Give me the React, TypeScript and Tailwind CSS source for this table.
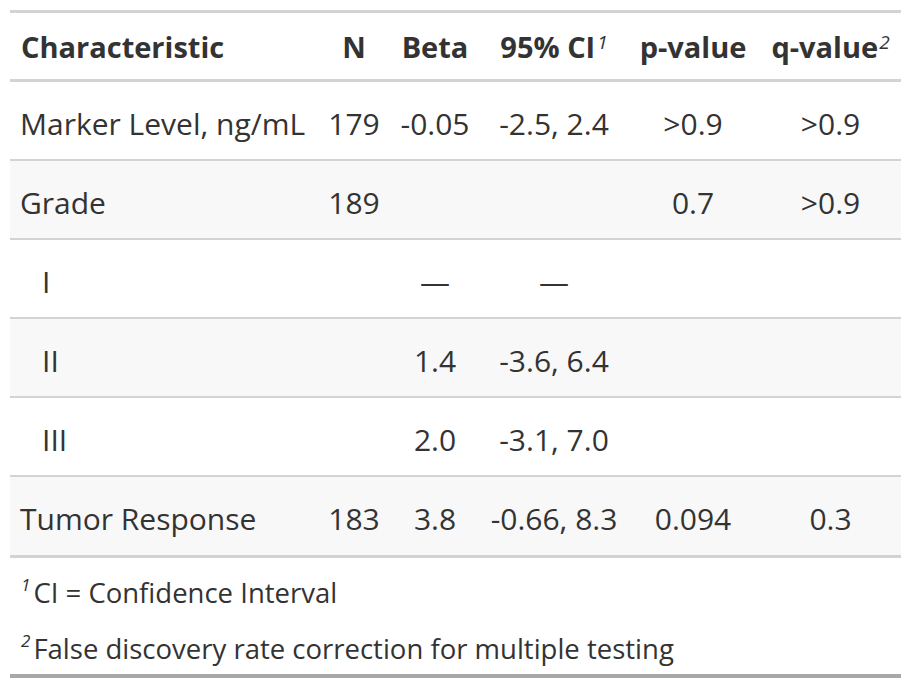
const rows: {
  label: string;
  indent?: boolean;
  n?: string;
  beta?: string;
  ci?: string;
  p?: string;
  q?: string;
}[] = [
  { label: "Marker Level, ng/mL", n: "179", beta: "-0.05", ci: "-2.5, 2.4", p: ">0.9", q: ">0.9" },
  { label: "Grade", n: "189", p: "0.7", q: ">0.9" },
  { label: "I", indent: true, beta: "—", ci: "—" },
  { label: "II", indent: true, beta: "1.4", ci: "-3.6, 6.4" },
  { label: "III", indent: true, beta: "2.0", ci: "-3.1, 7.0" },
  { label: "Tumor Response", n: "183", beta: "3.8", ci: "-0.66, 8.3", p: "0.094", q: "0.3" },
];

const cols = "grid grid-cols-[310px_68px_94px_144px_134px_141px] items-center";

export default function App() {
  return (
    <div className="min-h-screen bg-white px-[10px] pt-[10px] text-[#333333] font-['Open_Sans',sans-serif] text-[30px]">
      <div className="w-[891px] border-t-[3px] border-b-[4px] border-t-[#d3d3d3] border-b-[#a8a8a8]">
        {/* column labels */}
        <div className={`${cols} h-[69px] pt-[2px] border-b-[3px] border-[#d3d3d3] font-bold text-[29px]`}>
          <div className="pl-[11px]">Characteristic</div>
          <div className="text-center">N</div>
          <div className="text-center">Beta</div>
          <div className="text-center whitespace-nowrap">
            95% CI<sup className="font-normal italic text-[19px] ml-[2px]">1</sup>
          </div>
          <div className="text-center">p-value</div>
          <div className="text-center whitespace-nowrap">
            q-value<sup className="font-normal italic text-[19px] ml-[1px]">2</sup>
          </div>
        </div>

        {rows.map((r, i) => (
          <div
            key={r.label}
            className={`${cols} pt-[5px] ${i === rows.length - 1 ? "h-[81px] border-b-[3px]" : "h-[79px] border-b-2"} border-[#d3d3d3] ${i % 2 === 1 ? "bg-[#f8f8f8]" : "bg-white"}`}
          >
            <div className={r.indent ? "pl-[32px]" : "pl-[10px]"}>{r.label}</div>
            <div className="text-center">{r.n}</div>
            <div className="text-center">{r.beta}</div>
            <div className="text-center whitespace-nowrap">{r.ci}</div>
            <div className="text-center">{r.p}</div>
            <div className="text-center">{r.q}</div>
          </div>
        ))}

        {/* footnotes */}
        <div className="pt-[7px] pb-[-3px] text-[27.5px]">
          <div className="h-[56px] flex items-center pl-[11px]">
            <sup className="italic text-[17px] mr-[3px]">1</sup>CI = Confidence Interval
          </div>
          <div className="h-[53px] flex items-center pl-[11px] pt-[3px]">
            <sup className="italic text-[17px] mr-[3px]">2</sup>False discovery rate correction for multiple testing
          </div>
        </div>
      </div>
    </div>
  );
}
